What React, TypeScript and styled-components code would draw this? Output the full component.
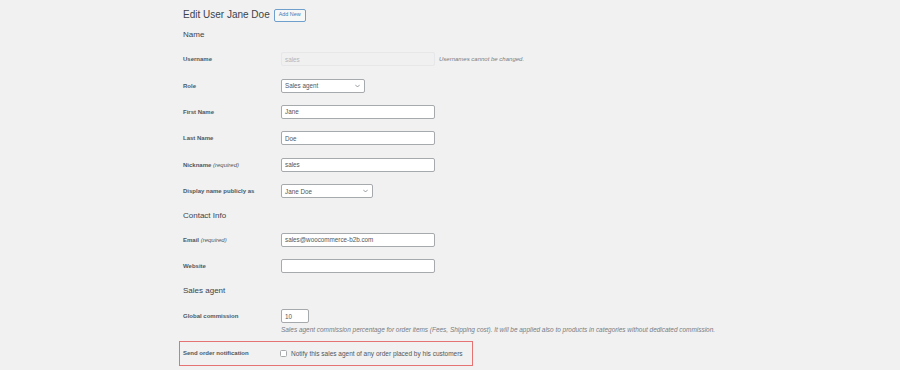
import React from "react";
import styled, { createGlobalStyle } from "styled-components";

const GlobalStyle = createGlobalStyle`
  html, body {
    margin: 0;
    padding: 0;
    background: #f1f1f1;
  }
  body {
    font-family: "Liberation Sans", Arial, sans-serif;
    color: #3c434a;
  }
`;

const Page = styled.div`
  width: 900px;
  height: 370px;
  box-sizing: border-box;
  padding: 8px 0 0 183px;
  overflow: hidden;
`;

const TitleRow = styled.div`
  display: flex;
  align-items: center;
  gap: 4px;
  height: 14px;
`;

const Title = styled.h1`
  margin: 0;
  font-size: 10px;
  line-height: 14px;
  font-weight: 400;
  color: #3c434a;
`;

const AddNew = styled.button`
  height: 13px;
  padding: 0 4px;
  font-family: inherit;
  font-size: 5.4px;
  font-weight: 400;
  color: #3a7dbb;
  background: #f6f7f7;
  border: 0.6px solid #6f9fcc;
  border-radius: 2px;
  line-height: 1;
`;

const Heading = styled.h2<{ $h: number }>`
  margin: 0;
  height: ${(p) => p.$h}px;
  display: flex;
  align-items: center;
  font-size: 8px;
  font-weight: 400;
  color: #3c434a;
`;

const Row = styled.div<{ $h?: number }>`
  display: flex;
  align-items: center;
  height: ${(p) => p.$h ?? 26.4}px;
`;

const TopRow = styled.div`
  display: flex;
  align-items: flex-start;
  padding: 8px 0 6.8px;
`;

const Label = styled.div<{ $pt?: number }>`
  width: 98px;
  flex: none;
  font-size: 6px;
  font-weight: 700;
  color: #50575e;
  padding-top: ${(p) => p.$pt ?? 0}px;
  white-space: nowrap;

  i {
    font-weight: 400;
  }
`;

const Field = styled.div`
  display: flex;
  flex-direction: column;
`;

const Inline = styled.div`
  display: flex;
  align-items: center;
  gap: 4px;
`;

const TextInput = styled.div<{ $w: number; $disabled?: boolean }>`
  width: ${(p) => p.$w}px;
  height: 14px;
  box-sizing: border-box;
  display: flex;
  align-items: center;
  padding: 0 3px;
  font-size: 6.3px;
  color: ${(p) => (p.$disabled ? "#b4b6b9" : "#50575e")};
  background: ${(p) => (p.$disabled ? "#f0f0f1" : "#ffffff")};
  border: 0.6px solid ${(p) => (p.$disabled ? "#e6e7e9" : "#a7aaad")};
  border-radius: 2px;
`;

const Select = styled(TextInput)`
  justify-content: space-between;
  padding-right: 4px;
`;

const Chevron = () => (
  <svg width="5" height="4" viewBox="0 0 10 6" fill="none">
    <path d="M1 1l4 4 4-4" stroke="#646970" strokeWidth="1.3" strokeLinecap="round" strokeLinejoin="round" />
  </svg>
);

const Note = styled.span`
  font-size: 6px;
  font-style: italic;
  color: #787c82;
  white-space: nowrap;
`;

const Description = styled(Note)`
  margin-top: 2px;
  font-size: 6.45px;
  line-height: 9px;
`;

const Highlight = styled.div`
  display: flex;
  align-items: center;
  height: 25px;
  width: 294px;
  box-sizing: border-box;
  margin-left: -4px;
  padding-left: 3px;
  border: 1.4px solid #e57373;
`;

const CheckLabel = styled.label`
  display: flex;
  align-items: center;
  gap: 4px;
  font-size: 6.5px;
  color: #50575e;
  white-space: nowrap;
`;

const Box = styled.span`
  width: 7px;
  height: 7px;
  box-sizing: border-box;
  border: 0.7px solid #a7aaad;
  border-radius: 1.5px;
  background: #fff;
  margin-left: -1px;
`;

type Input = { label: React.ReactNode; value: string; w: number; select?: boolean; disabled?: boolean; note?: string };

const nameRows: Input[] = [
  { label: "Username", value: "sales", w: 154, disabled: true, note: "Usernames cannot be changed." },
  { label: "Role", value: "Sales agent", w: 84, select: true },
  { label: "First Name", value: "Jane", w: 154 },
  { label: "Last Name", value: "Doe", w: 154 },
  { label: <>Nickname <i>(required)</i></>, value: "sales", w: 154 },
  { label: "Display name publicly as", value: "Jane Doe", w: 92, select: true },
];

const contactRows: Input[] = [
  { label: <>Email <i>(required)</i></>, value: "sales@woocommerce-b2b.com", w: 154 },
  { label: "Website", value: "", w: 154 },
];

const FieldRow = ({ row }: { row: Input }) => (
  <Row>
    <Label>{row.label}</Label>
    <Inline>
      {row.select ? (
        <Select $w={row.w}>
          {row.value}
          <Chevron />
        </Select>
      ) : (
        <TextInput $w={row.w} $disabled={row.disabled}>
          {row.value}
        </TextInput>
      )}
      {row.note && <Note>{row.note}</Note>}
    </Inline>
  </Row>
);

export default function App() {
  return (
    <Page>
      <GlobalStyle />
      <TitleRow>
        <Title>Edit User Jane Doe</Title>
        <AddNew>Add New</AddNew>
      </TitleRow>

      <Heading $h={24}>Name</Heading>
      {nameRows.map((r, i) => (
        <FieldRow key={i} row={r} />
      ))}

      <Heading $h={22}>Contact Info</Heading>
      {contactRows.map((r, i) => (
        <FieldRow key={i} row={r} />
      ))}

      <Heading $h={22}>Sales agent</Heading>
      <TopRow>
        <Label $pt={4}>Global commission</Label>
        <Field>
          <TextInput $w={28}>10</TextInput>
          <Description>
            Sales agent commission percentage for order items (Fees, Shipping cost). It will be applied also to
            products in categories without dedicated commission.
          </Description>
        </Field>
      </TopRow>

      <Highlight>
        <Label>Send order notification</Label>
        <CheckLabel>
          <Box />
          Notify this sales agent of any order placed by his customers
        </CheckLabel>
      </Highlight>
    </Page>
  );
}
